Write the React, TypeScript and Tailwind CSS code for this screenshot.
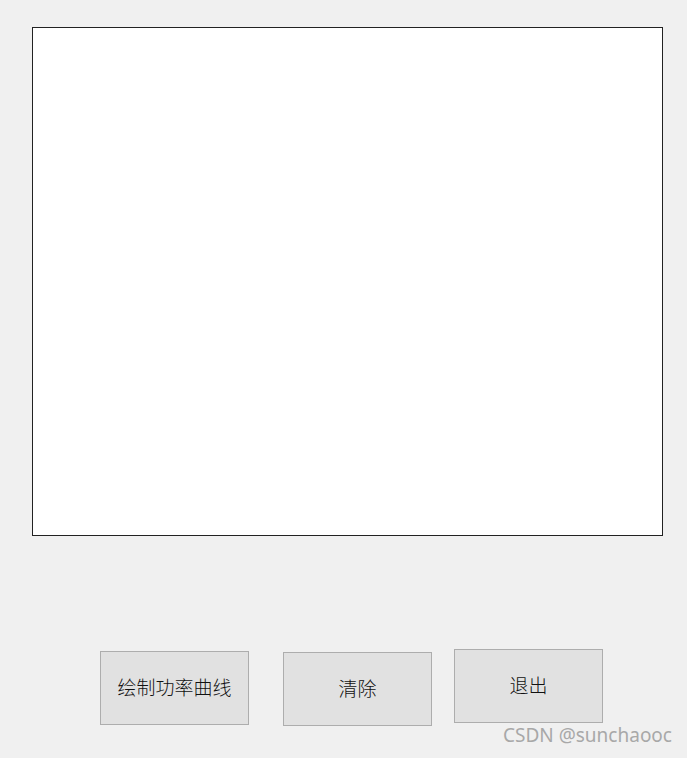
import React from "react";

const Btn = ({ label, className }: { label: string; className: string }) => (
  <button
    className={`w-[149px] h-[74px] pb-[3px] bg-[#e1e1e1] border border-[#adadad] text-[#111111] text-[19px] font-light leading-none ${className}`}
  >
    {label}
  </button>
);

const App = () => {
  return (
    <div className="relative w-[687px] h-[758px] bg-[#f0f0f0] overflow-hidden font-['Noto_Sans_CJK_SC',sans-serif]">
      <div className="pt-[27px] pl-[32px]">
        <div className="w-[631px] h-[509px] bg-white border border-[#222222]" />
      </div>
      <div className="flex items-start pl-[100px]">
        <Btn label="绘制功率曲线" className="mt-[115px]" />
        <Btn label="清除" className="mt-[116px] ml-[34px]" />
        <Btn label="退出" className="mt-[113px] ml-[22px]" />
      </div>
      <div className="absolute left-[503px] top-[726px] text-[19px] text-[#a8a8a8] font-['Noto_Sans',sans-serif] leading-none whitespace-nowrap">
        CSDN @sunchaooc
      </div>
    </div>
  );
};

export default App;
